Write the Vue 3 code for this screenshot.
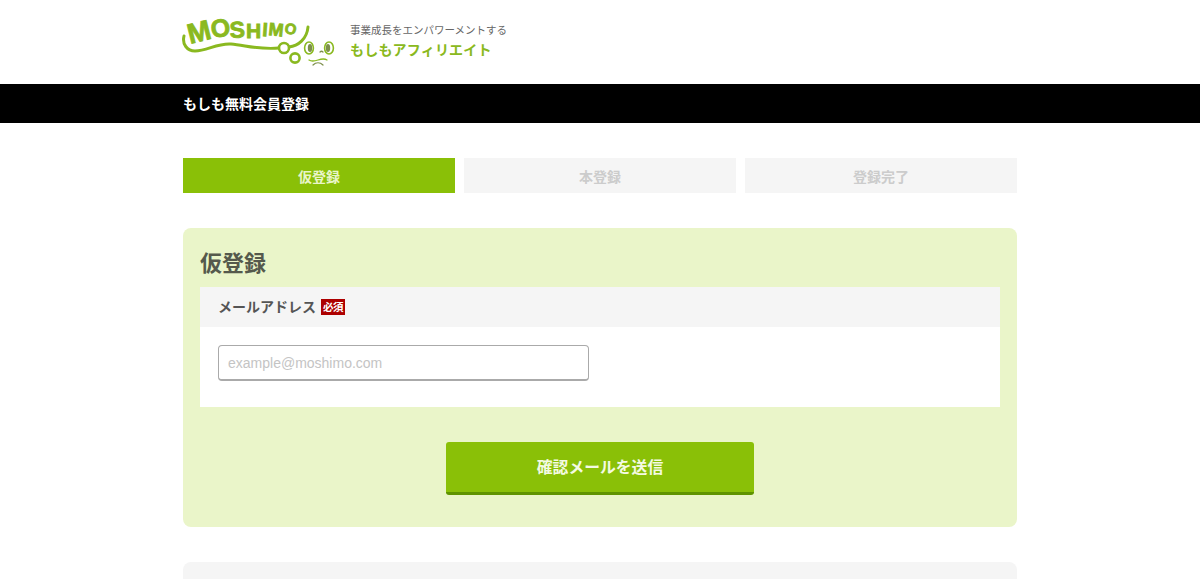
<script setup>
const steps = [
  { label: "仮登録", active: true },
  { label: "本登録", active: false },
  { label: "登録完了", active: false },
];

// ロゴの文字は一文字ずつ傾ける
const logoLetters = [
  { ch: "M", x: 190, y: 44, size: 28, rot: -14 },
  { ch: "O", x: 212, y: 38, size: 25, rot: -8 },
  { ch: "S", x: 230, y: 38, size: 23, rot: -3 },
  { ch: "H", x: 246, y: 38, size: 21, rot: 0 },
  { ch: "I", x: 262, y: 36, size: 19, rot: 4 },
  { ch: "M", x: 268, y: 35, size: 18, rot: 6 },
  { ch: "O", x: 284, y: 33, size: 15, rot: 10 },
];
</script>

<template>
  <div class="page">
    <header class="site-head">
      <div class="wrap head-inner">
        <svg class="logo" width="160" height="56" viewBox="180 12 160 56" fill="none">
          <text
            v-for="(l, i) in logoLetters"
            :key="i"
            :transform="`translate(${l.x} ${l.y}) rotate(${l.rot})`"
            :font-size="l.size"
            class="logo-letter"
          >{{ l.ch }}</text>
          <path d="M184 36c-2 8 3 15 11 15 12 0 22-8 36-7 14 1 27 6 48 4" stroke="#8ab920" stroke-width="3" stroke-linecap="round" />
          <path d="M289 47c9-1 18-8 19-20" stroke="#8ab920" stroke-width="3" stroke-linecap="round" />
          <circle cx="284" cy="48" r="5" stroke="#8ab920" stroke-width="2.6" fill="#fff" />
          <circle cx="295" cy="58" r="4.6" stroke="#8ab920" stroke-width="2.6" fill="#fff" />
          <ellipse cx="309" cy="48" rx="4.4" ry="6" stroke="#8ab920" stroke-width="1.6" />
          <ellipse cx="329" cy="48" rx="4.4" ry="6" stroke="#8ab920" stroke-width="1.6" />
          <ellipse cx="310" cy="48" rx="2.2" ry="4" fill="#7d8f4c" />
          <ellipse cx="328" cy="48" rx="2.2" ry="4" fill="#7d8f4c" />
          <path d="M309 60c3 2 6 1 9 0 3-1 6-2 9 0" stroke="#8ab920" stroke-width="1.3" stroke-linecap="round" />
          <path d="M313 65c3-3 7-3 10 0M320 52c1-1 2-1 3 0" stroke="#7d8f4c" stroke-width="1.2" stroke-linecap="round" />
        </svg>
        <div class="brand">
          <div class="brand-sub">事業成長をエンパワーメントする</div>
          <div class="brand-name">もしもアフィリエイト</div>
        </div>
      </div>
    </header>

    <div class="title-bar">
      <div class="wrap">もしも無料会員登録</div>
    </div>

    <main class="wrap">
      <ol class="steps">
        <li
          v-for="s in steps"
          :key="s.label"
          class="step"
          :class="{ 'step-on': s.active }"
        >{{ s.label }}</li>
      </ol>

      <section class="panel">
        <h2 class="panel-title">仮登録</h2>
        <div class="field">
          <div class="field-head">
            メールアドレス
            <span class="req">必須</span>
          </div>
          <div class="field-body">
            <input class="mail" type="text" placeholder="example@moshimo.com" />
          </div>
        </div>
        <div class="actions">
          <button class="send" type="button">確認メールを送信</button>
        </div>
      </section>

      <section class="next-panel"></section>
    </main>
  </div>
</template>

<style>
html,
body {
  background: #fff;
  overflow: hidden;
}
</style>

<style scoped>
.page {
  height: 579px;
  overflow: hidden;
  font-family: "Noto Sans CJK JP", "Noto Sans", sans-serif;
  color: #555;
}
.wrap {
  width: 834px;
  margin: 0 auto;
}

.site-head {
  height: 84px;
}
.head-inner {
  display: flex;
  align-items: flex-start;
  padding-top: 12px;
  box-sizing: border-box;
}
.logo {
  display: block;
  margin-left: -3px;
  flex: none;
}
.logo-letter {
  font-family: "Liberation Sans", sans-serif;
  font-weight: 700;
  fill: #8ab920;
  stroke: #8ab920;
  stroke-width: 0.8;
}
.brand {
  margin-left: 10px;
  padding-top: 8px;
}
.brand-sub {
  font-size: 10.5px;
  line-height: 19px;
  color: #666;
}
.brand-name {
  font-size: 14px;
  line-height: 20px;
  font-weight: 700;
  letter-spacing: 0.2px;
  color: #8ab920;
}

.title-bar {
  height: 39px;
  background: #000;
  color: #fff;
  font-size: 14px;
  font-weight: 700;
  line-height: 39px;
}

.steps {
  display: grid;
  grid-template-columns: repeat(3, 1fr);
  gap: 9px;
  list-style: none;
  margin: 35px 0;
  padding: 0;
}
.step {
  height: 35px;
  line-height: 36px;
  text-align: center;
  font-size: 14px;
  font-weight: 700;
  background: #f5f5f5;
  color: #ccc;
}
.step-on {
  background: #8ac007;
  color: #e9f5c9;
}

.panel {
  height: 299px;
  box-sizing: border-box;
  padding: 18px 17px;
  background: #eaf5c9;
  border-radius: 8px;
}
.panel-title {
  margin: 0;
  height: 41px;
  font-size: 22px;
  line-height: 31px;
  font-weight: 700;
  color: #55594c;
}
.field-head {
  height: 40px;
  display: flex;
  align-items: center;
  gap: 5px;
  padding: 0 18px 2px;
  box-sizing: border-box;
  background: #f5f5f5;
  font-size: 14px;
  font-weight: 700;
  color: #555;
}
.req {
  width: 24px;
  height: 16px;
  margin-top: 2px;
  background: #ad0000;
  color: #fff;
  font-size: 10.5px;
  line-height: 16px;
  text-align: center;
  font-weight: 700;
  white-space: nowrap;
  letter-spacing: -0.5px;
}
.field-body {
  height: 80px;
  box-sizing: border-box;
  padding: 18px;
  background: #fff;
}
.mail {
  display: block;
  width: 371px;
  height: 36px;
  box-sizing: border-box;
  padding: 0 9px;
  border: 1px solid #aaa;
  border-bottom-width: 2px;
  border-radius: 4px;
  background: #fff;
  outline: none;
  font-family: "Liberation Sans", sans-serif;
  font-size: 14px;
}
.mail::placeholder {
  color: #c4c4c4;
  opacity: 1;
}

.actions {
  display: flex;
  justify-content: center;
  padding-top: 35px;
}
.send {
  width: 308px;
  height: 53px;
  border: none;
  border-bottom: 3px solid #5f9300;
  border-radius: 3px;
  background: #8ac007;
  color: #f4fae2;
  font-family: inherit;
  font-size: 15.8px;
  font-weight: 700;
  padding: 0 0 2px;
}

.next-panel {
  height: 60px;
  margin-top: 35px;
  background: #f5f5f5;
  border-radius: 8px;
}
</style>
